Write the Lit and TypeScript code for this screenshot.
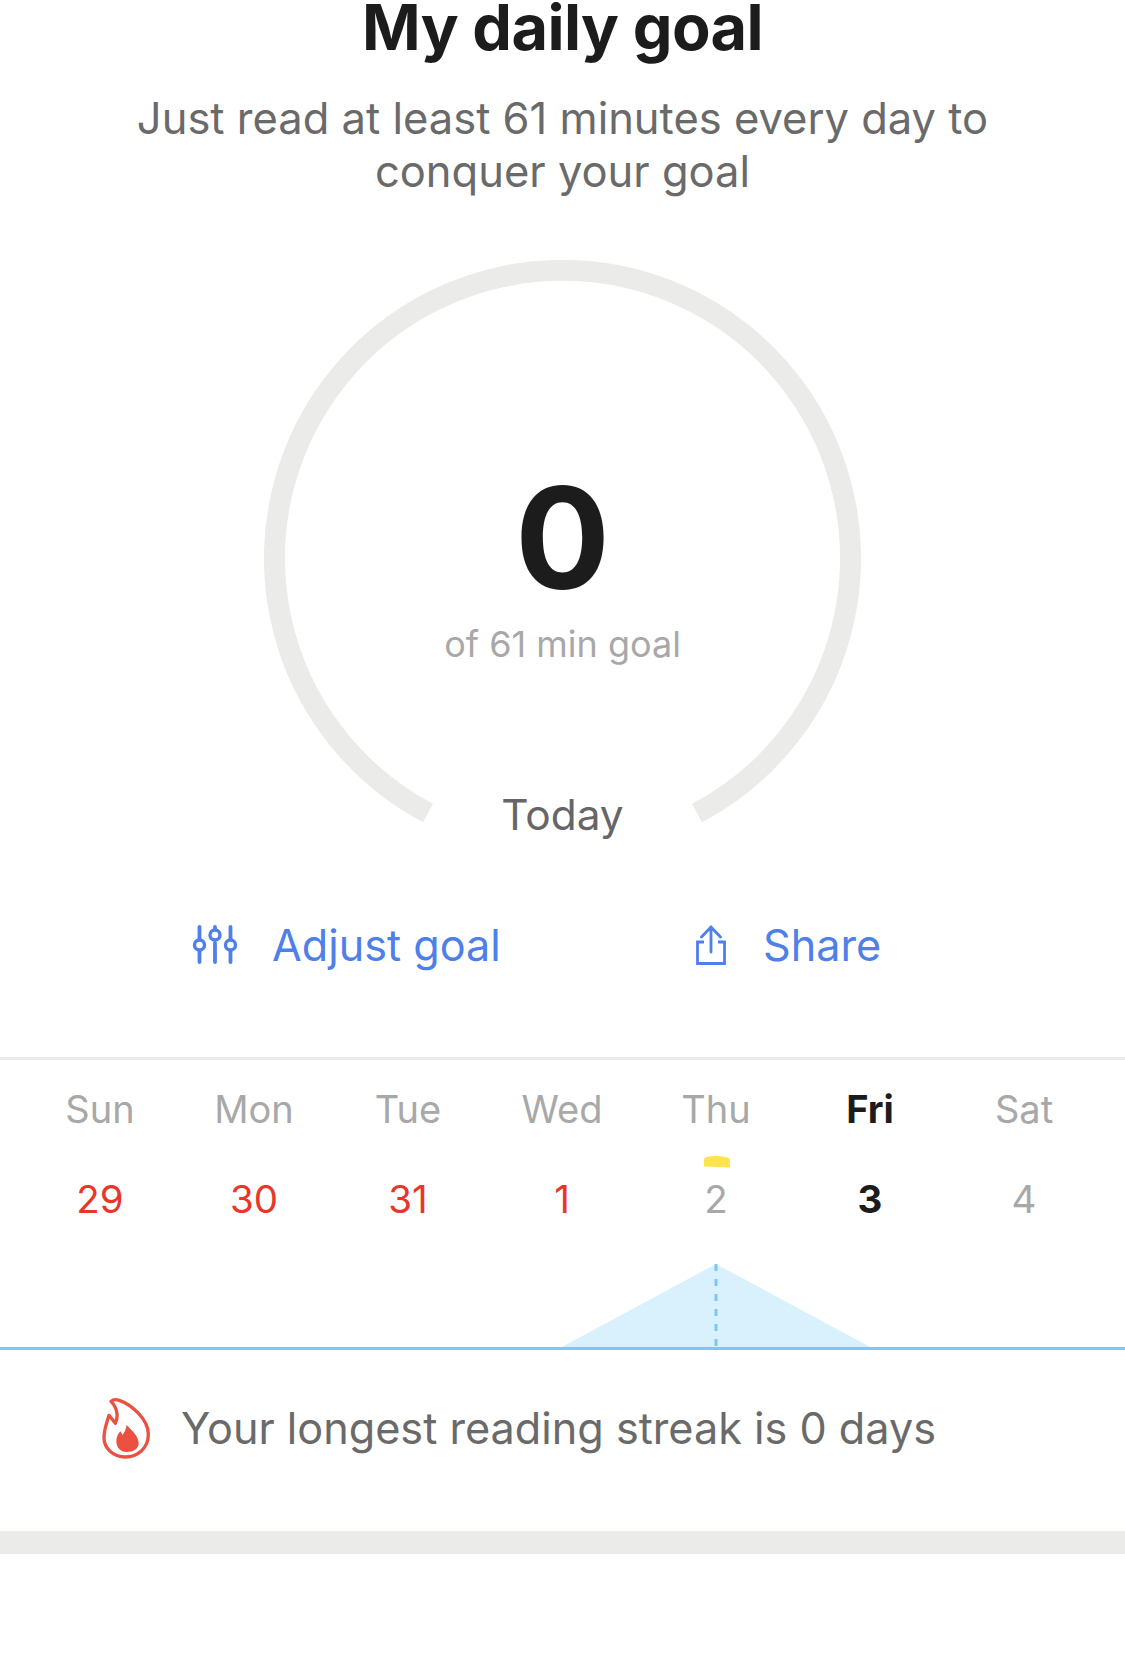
import { LitElement, html, css, svg } from 'lit';
import { customElement } from 'lit/decorators.js';

const days = [
  { name: 'Sun', num: '29', kind: 'missed' },
  { name: 'Mon', num: '30', kind: 'missed' },
  { name: 'Tue', num: '31', kind: 'missed' },
  { name: 'Wed', num: '1', kind: 'missed' },
  { name: 'Thu', num: '2', kind: 'done' },
  { name: 'Fri', num: '3', kind: 'today' },
  { name: 'Sat', num: '4', kind: 'future' },
];

const slidersIcon = svg`
  <g fill="none" stroke="#4f7fe8" stroke-width="3.8" stroke-linecap="round">
    <path d="M7.5 2v12M7.5 26v11M23 18v19M23 2v2M38.5 2v12M38.5 26v11"/>
    <circle cx="7.5" cy="20" r="5" stroke-width="3.4"/>
    <circle cx="23" cy="10" r="5" stroke-width="3.4"/>
    <circle cx="38.5" cy="20" r="5" stroke-width="3.4"/>
  </g>`;

const shareIcon = svg`
  <g fill="none" stroke="#4f7fe8" stroke-width="2.8">
    <path d="M8.5 17H2v21.5h27V17h-6.5"/>
    <path d="M15.5 27V2M6 12l9.5-10L25 12" stroke-linecap="round"/>
  </g>`;

const flameIcon = svg`
  <path d="M33 13 C40 6 52 8 58 10 C92 22 145 65 145 112 C145 155 112 180 76 180 C38 180 12 152 12 122 C12 95 22 72 27 55 L46 79 C54 62 55 35 33 13 Z"
    fill="none" stroke="#ea5141" stroke-width="10" stroke-linejoin="round"/>
  <path d="M80 84 C92 98 116 116 116 138 C116 156 100 165 80 165 C62 165 49 152 49 132 C49 120 55 109 61 103 L68 114 C74 106 78 96 80 84 Z"
    fill="#ea5141"/>`;

@customElement('app-root')
export class AppRoot extends LitElement {
  static styles = css`
    :host {
      display: block;
      height: 1655px;
      overflow: hidden;
      background: #fff;
      font-family: Inter, 'Liberation Sans', sans-serif;
      color: #1c1c1c;
    }
    .title {
      margin: 0;
      text-align: center;
      font-size: 63px;
      line-height: 54px;
      font-weight: 700;
      letter-spacing: -0.6px;
    }
    .lead {
      margin: 38px 0 0;
      padding: 0 100px;
      text-align: center;
      font-size: 43.5px;
      line-height: 53px;
      color: #6a6a6a;
    }
    .ring-wrap {
      display: grid;
      justify-items: center;
      margin-top: 62px;
      height: 591px;
    }
    .ring-wrap > * {
      grid-area: 1 / 1;
    }
    .ring {
      width: 597px;
      height: 591px;
    }
    .ring-text {
      display: flex;
      flex-direction: column;
      align-items: center;
    }
    .count {
      margin-top: 193px;
      font-size: 141px;
      line-height: 170px;
      font-weight: 700;
    }
    .of {
      margin-top: 1px;
      font-size: 36px;
      line-height: 40px;
      color: #a8a8a8;
    }
    .when {
      margin-top: 125px;
      font-size: 42.4px;
      line-height: 52px;
      color: #666;
    }
    .actions {
      display: flex;
      margin-top: 64px;
      height: 60px;
      align-items: center;
      padding-left: 192px;
      font-size: 43.2px;
      color: #4f7fe8;
    }
    .action {
      display: flex;
      align-items: center;
    }
    .action svg {
      display: block;
    }
    .adjust {
      gap: 34px;
      width: 503px;
    }
    .share {
      gap: 36px;
    }
    .week {
      margin-top: 82px;
      border-top: 3px solid #e9e9e7;
      padding: 25px 23px 0;
      display: grid;
      grid-template-columns: repeat(7, 154px);
      text-align: center;
    }
    .day {
      font-size: 38px;
      line-height: 48px;
      color: #a8a8a8;
    }
    .day.today {
      font-weight: 700;
      color: #1c1c1c;
    }
    .num-cell {
      display: flex;
      flex-direction: column;
      align-items: center;
      height: 67px;
      margin-top: 23px;
    }
    .mark {
      width: 26px;
      height: 11px;
      margin-left: 2px;
      background: #fde34e;
      border-radius: 50% 50% 0 0 / 30% 30% 0 0;
      transform: rotate(2deg);
    }
    .mark-slot {
      height: 20px;
    }
    .num {
      font-size: 38.5px;
      line-height: 47px;
      color: #a8a8a8;
    }
    .num.missed {
      color: #e9362b;
    }
    .num.today {
      font-weight: 700;
      color: #1c1c1c;
    }
    .chart {
      display: block;
      width: 1125px;
      height: 87px;
      margin-top: 40px;
    }
    .streak {
      display: flex;
      align-items: center;
      gap: 29px;
      padding: 27px 0 52px 100px;
      height: 102px;
      font-size: 43.2px;
      color: #6a6a6a;
    }
    .band {
      height: 23px;
      background: #ebebe9;
    }
  `;

  render() {
    return html`
      <h1 class="title">My daily goal</h1>
      <p class="lead">Just read at least 61 minutes every day to conquer your goal</p>
      <div class="ring-wrap">
        <svg class="ring" viewBox="0 0 597 591">
          <path d="M164 553 A 288 288 0 1 1 433 553" fill="none" stroke="#ebebe9" stroke-width="21"/>
        </svg>
        <div class="ring-text">
          <div class="count">0</div>
          <div class="of">of 61 min goal</div>
          <div class="when">Today</div>
        </div>
      </div>
      <div class="actions">
        <div class="action adjust">
          <svg width="46" height="40" viewBox="0 0 46 40">${slidersIcon}</svg>
          <span>Adjust goal</span>
        </div>
        <div class="action share">
          <svg width="32" height="41" viewBox="0 0 31 41">${shareIcon}</svg>
          <span>Share</span>
        </div>
      </div>
      <div class="week">
        ${days.map((d) => html`<div class="day ${d.kind === 'today' ? 'today' : ''}">${d.name}</div>`)}
        ${days.map(
          (d) => html`<div class="num-cell">
            <div class="mark-slot">${d.kind === 'done' ? html`<div class="mark"></div>` : ''}</div>
            <div class="num ${d.kind}">${d.num}</div>
          </div>`,
        )}
      </div>
      <svg class="chart" viewBox="0 0 1125 87">
        <path d="M560 85 L716 1 L872 85 Z" fill="#d9f0fd"/>
        <path d="M716 1V84" stroke="#7cc7f7" stroke-width="3" stroke-dasharray="7 8"/>
        <path d="M0 85.5H1125" stroke="#7cc7f7" stroke-width="3"/>
      </svg>
      <div class="streak">
        <svg width="52" height="63" viewBox="0 0 156 189">${flameIcon}</svg>
        <span>Your longest reading streak is 0 days</span>
      </div>
      <div class="band"></div>
    `;
  }
}
